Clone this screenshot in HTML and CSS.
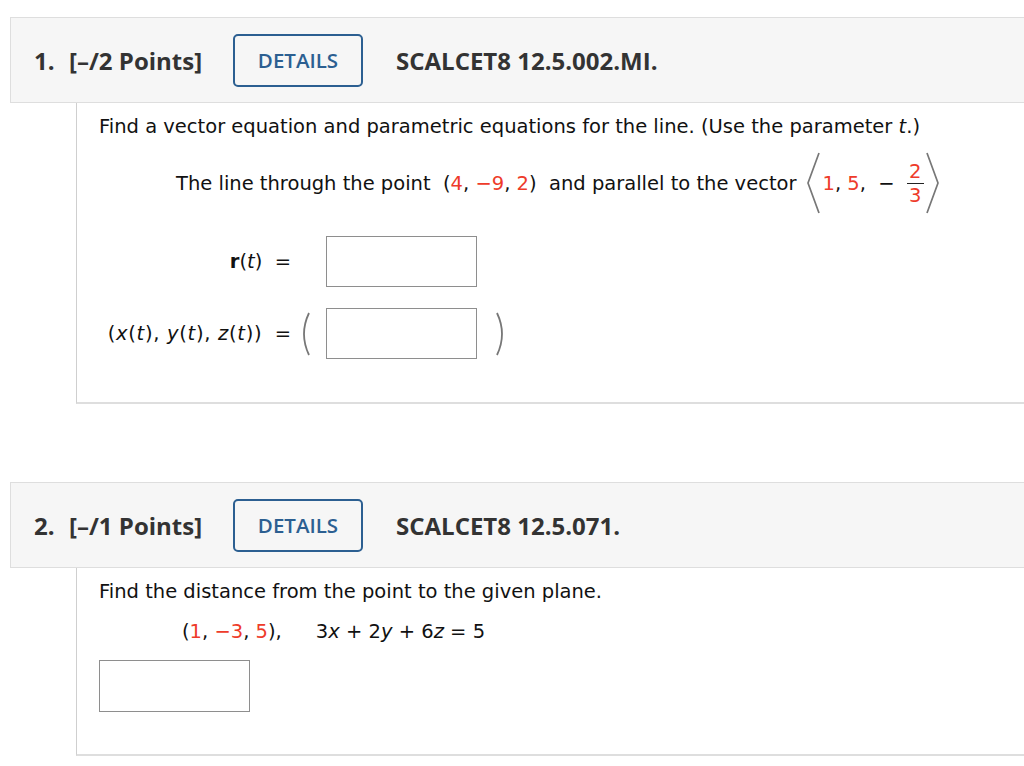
FILE: index.html
```html
<!DOCTYPE html>
<html>
<head>
<meta charset="utf-8">
<link rel="stylesheet" href="styles.css">
</head>
<body>
<div class="question q1">
  <div class="qhead">
    <span class="qnum">1.</span>
    <span class="qpts">[–/2 Points]</span>
    <span class="details">DETAILS</span>
    <span class="qref">SCALCET8 12.5.002.MI.</span>
  </div>
  <div class="qbody body1">
    <p class="line first">Find a vector equation and parametric equations for the line. (Use the parameter <i>t</i>.)</p>
    <div class="given">
      <span class="gtext">The line through the point&nbsp; (<span class="red">4</span>, <span class="red">−9</span>, <span class="red">2</span>)&nbsp; and parallel to the vector</span>
      <span class="vec">
        <svg class="angle al" width="19" height="62" viewBox="0 0 19 62"><path d="M16 1 L5 31 L16 61" fill="none" stroke="#777" stroke-width="1.7"/></svg>
        <span class="vtext"><span class="red">1</span>, <span class="red">5</span>, &nbsp;−&nbsp;&nbsp;</span>
        <span class="frac"><span class="num red">2</span><span class="den red">3</span></span>
        <svg class="angle ar" width="17" height="62" viewBox="0 0 17 62"><path d="M3 1 L14 31 L3 61" fill="none" stroke="#777" stroke-width="1.7"/></svg>
      </span>
    </div>
    <div class="answers">
      <span class="lbl"><b>r</b>(<i>t</i>) &nbsp;=</span>
      <span class="pl"></span>
      <span class="box"></span>
      <span class="pr"></span>
      <span class="lbl"><span class="wide">(<i>x</i>(<i>t</i>), <i>y</i>(<i>t</i>), <i>z</i>(<i>t</i>))</span> &nbsp;=</span>
      <span class="pl"><svg width="16" height="46" viewBox="0 0 16 46"><path d="M12 2 Q2 23 12 44" fill="none" stroke="#777" stroke-width="1.8"/></svg></span>
      <span class="box"></span>
      <span class="pr"><svg width="16" height="46" viewBox="0 0 16 46"><path d="M4 2 Q14 23 4 44" fill="none" stroke="#777" stroke-width="1.8"/></svg></span>
    </div>
  </div>
</div>
<div class="question q2">
  <div class="qhead">
    <span class="qnum">2.</span>
    <span class="qpts">[–/1 Points]</span>
    <span class="details">DETAILS</span>
    <span class="qref">SCALCET8 12.5.071.</span>
  </div>
  <div class="qbody body2">
    <p class="line first">Find the distance from the point to the given plane.</p>
    <p class="line point">(<span class="red">1</span>, <span class="red">−3</span>, <span class="red">5</span>),<span class="eq">3<i>x</i> + 2<i>y</i> + 6<i>z</i> = 5</span></p>
    <span class="box solo"></span>
  </div>
</div>
</body>
</html>
```
FILE: styles.css
```css
html, body {
  margin: 0;
  padding: 0;
  background: #fff;
  overflow: hidden;
}
body {
  width: 1024px;
  height: 766px;
  font-family: "DejaVu Sans", Verdana, sans-serif;
  color: #111;
}
.question {
  display: flex;
  flex-direction: column;
}
.q1 { margin-top: 17px; }
.q2 { margin-top: 78px; }
.qhead {
  margin-left: 10px;
  height: 84px;
  background: #f6f6f6;
  border: 1px solid #dedede;
  border-right: none;
  display: flex;
  align-items: center;
  font-family: "Open Sans", sans-serif;
  font-weight: 700;
  font-stretch: 95%;
  font-size: 24px;
  color: #333;
  white-space: nowrap;
}
.qnum { margin-left: 23px; width: 35px; }
.qpts { width: 164px; }
.details {
  box-sizing: border-box;
  width: 130px;
  height: 53px;
  border: 2px solid #2c5f91;
  border-radius: 5px;
  color: #2c5f91;
  display: flex;
  align-items: center;
  justify-content: center;
  font-size: 20.5px;
  font-weight: 600;
  font-stretch: 97%;
}
.qref { margin-left: 33px; }
.qbody {
  margin-left: 76px;
  border-left: 1px solid #cfcfcf;
  border-bottom: 2px solid #dedede;
  box-sizing: border-box;
  padding-left: 22px;
  font-size: 19.5px;
}
.body1 { height: 301px; }
.body2 { height: 188px; }
.line { margin: 0; line-height: 24px; white-space: nowrap; }
.first { margin-top: 12px; }
.red { color: #ee3b2a; }
.given {
  margin-top: 13px;
  margin-left: 77px;
  display: flex;
  align-items: center;
  height: 62px;
  white-space: nowrap;
}
.vec {
  display: flex;
  align-items: center;
  margin-left: 7px;
}
.vtext { margin-left: 0; }
.frac {
  display: inline-flex;
  flex-direction: column;
  align-items: center;
  line-height: 23px;
}
.frac .num { border-bottom: 1.5px solid #222; padding: 0 2px; }
.answers {
  margin-top: 22px;
  display: grid;
  grid-template-columns: 192px 35px 151px 40px;
  row-gap: 21px;
  align-items: center;
  width: max-content;
  white-space: nowrap;
}
.lbl { text-align: right; }
.wide { letter-spacing: 0.7px; }
.pl { display: flex; justify-content: flex-start; padding-left: 6px; }
.pr { display: flex; justify-content: flex-start; padding-left: 16px; }
.box {
  box-sizing: border-box;
  width: 151px;
  height: 51px;
  border: 1px solid #8e8e8e;
  background: #fff;
  display: block;
}
.point { margin-top: 16px; margin-left: 83px; }
.eq { margin-left: 34px; }
.solo { margin-top: 16px; height: 52px; }
```
